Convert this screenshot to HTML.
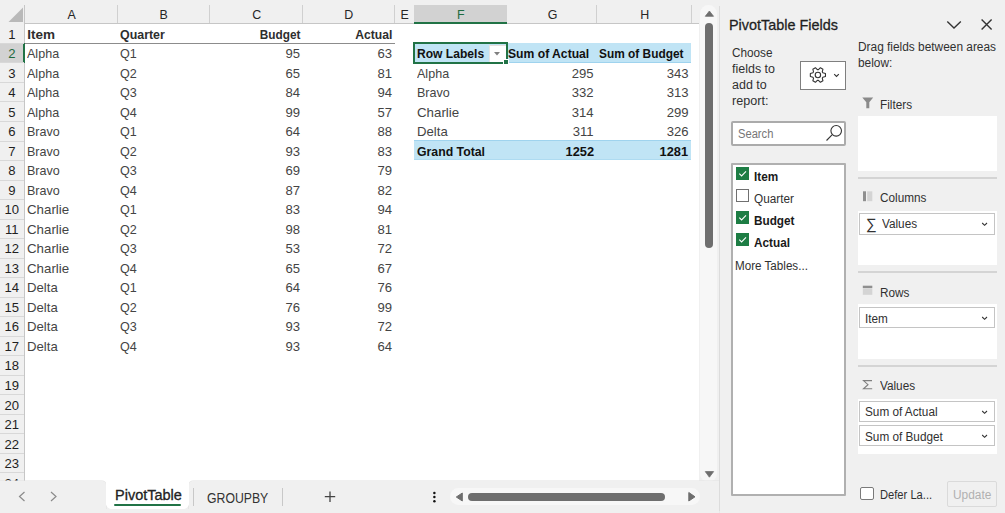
<!DOCTYPE html>
<html><head><meta charset="utf-8"><style>
html,body{margin:0;padding:0;}
body{width:1005px;height:513px;overflow:hidden;position:relative;background:#f0f0f0;font-family:"Liberation Sans", sans-serif;}
.r{position:absolute;}
.t{position:absolute;white-space:nowrap;font-family:"Liberation Sans", sans-serif;}
</style></head><body>
<div class="r" style="left:25px;top:24px;width:674px;height:470px;background:#ffffff;"></div>
<div class="r" style="left:0px;top:0px;width:700px;height:23px;background:#f0f0f0;"></div>
<div class="r" style="left:414px;top:5px;width:93px;height:18px;background:#d2d2d2;"></div>
<div class="r" style="left:414px;top:22px;width:93px;height:2px;background:#217346;"></div>
<div class="r" style="left:117px;top:5px;width:1px;height:18px;background:#d0d0d0;"></div>
<div class="r" style="left:209px;top:5px;width:1px;height:18px;background:#d0d0d0;"></div>
<div class="r" style="left:302px;top:5px;width:1px;height:18px;background:#d0d0d0;"></div>
<div class="r" style="left:394px;top:5px;width:1px;height:18px;background:#d0d0d0;"></div>
<div class="r" style="left:691px;top:5px;width:1px;height:18px;background:#d0d0d0;"></div>
<div class="r" style="left:596px;top:5px;width:1px;height:18px;background:#d0d0d0;"></div>
<div class="r" style="left:24px;top:23px;width:390px;height:1px;background:#c6c6c6;"></div>
<div class="r" style="left:507px;top:23px;width:192px;height:1px;background:#c6c6c6;"></div>
<div class="r" style="left:0px;top:23px;width:24px;height:458px;background:#f0f0f0;"></div>
<div class="r" style="left:24px;top:5px;width:1px;height:476px;background:#c6c6c6;"></div>
<div class="r" style="left:0px;top:43px;width:22.5px;height:20px;background:#d2d2d2;"></div>
<div class="r" style="left:23px;top:43px;width:2px;height:20px;background:#217346;"></div>
<div class="r" style="left:0px;top:43px;width:24px;height:1px;background:#d8d8d8;"></div>
<div class="r" style="left:0px;top:62px;width:24px;height:1px;background:#d8d8d8;"></div>
<div class="r" style="left:0px;top:82px;width:24px;height:1px;background:#d8d8d8;"></div>
<div class="r" style="left:0px;top:101px;width:24px;height:1px;background:#d8d8d8;"></div>
<div class="r" style="left:0px;top:121px;width:24px;height:1px;background:#d8d8d8;"></div>
<div class="r" style="left:0px;top:141px;width:24px;height:1px;background:#d8d8d8;"></div>
<div class="r" style="left:0px;top:160px;width:24px;height:1px;background:#d8d8d8;"></div>
<div class="r" style="left:0px;top:180px;width:24px;height:1px;background:#d8d8d8;"></div>
<div class="r" style="left:0px;top:199px;width:24px;height:1px;background:#d8d8d8;"></div>
<div class="r" style="left:0px;top:219px;width:24px;height:1px;background:#d8d8d8;"></div>
<div class="r" style="left:0px;top:238px;width:24px;height:1px;background:#d8d8d8;"></div>
<div class="r" style="left:0px;top:258px;width:24px;height:1px;background:#d8d8d8;"></div>
<div class="r" style="left:0px;top:277px;width:24px;height:1px;background:#d8d8d8;"></div>
<div class="r" style="left:0px;top:297px;width:24px;height:1px;background:#d8d8d8;"></div>
<div class="r" style="left:0px;top:316px;width:24px;height:1px;background:#d8d8d8;"></div>
<div class="r" style="left:0px;top:336px;width:24px;height:1px;background:#d8d8d8;"></div>
<div class="r" style="left:0px;top:355px;width:24px;height:1px;background:#d8d8d8;"></div>
<div class="r" style="left:0px;top:375px;width:24px;height:1px;background:#d8d8d8;"></div>
<div class="r" style="left:0px;top:394px;width:24px;height:1px;background:#d8d8d8;"></div>
<div class="r" style="left:0px;top:414px;width:24px;height:1px;background:#d8d8d8;"></div>
<div class="r" style="left:0px;top:433px;width:24px;height:1px;background:#d8d8d8;"></div>
<div class="r" style="left:0px;top:453px;width:24px;height:1px;background:#d8d8d8;"></div>
<div class="r" style="left:0px;top:472px;width:24px;height:1px;background:#d8d8d8;"></div>
<svg class="r" style="left:0;top:0" width="25" height="23"><polygon points="8.5,22 23,22 23,7.5" fill="#b9b9b9"/></svg>
<div class="t" style="left:71.75px;top:5.40px;transform-origin:0 0;transform-origin:0 0;transform:translateX(-50%) scaleX(0.92);font-size:13.5px;line-height:20px;font-weight:400;color:#262626;">A</div>
<div class="t" style="left:164.30px;top:5.40px;transform-origin:0 0;transform-origin:0 0;transform:translateX(-50%) scaleX(0.92);font-size:13.5px;line-height:20px;font-weight:400;color:#262626;">B</div>
<div class="t" style="left:256.80px;top:5.40px;transform-origin:0 0;transform-origin:0 0;transform:translateX(-50%) scaleX(0.92);font-size:13.5px;line-height:20px;font-weight:400;color:#262626;">C</div>
<div class="t" style="left:349.20px;top:5.40px;transform-origin:0 0;transform-origin:0 0;transform:translateX(-50%) scaleX(0.92);font-size:13.5px;line-height:20px;font-weight:400;color:#262626;">D</div>
<div class="t" style="left:404.95px;top:5.40px;transform-origin:0 0;transform-origin:0 0;transform:translateX(-50%) scaleX(0.92);font-size:13.5px;line-height:20px;font-weight:400;color:#262626;">E</div>
<div class="t" style="left:461.10px;top:5.40px;transform-origin:0 0;transform-origin:0 0;transform:translateX(-50%) scaleX(0.92);font-size:13.5px;line-height:20px;font-weight:400;color:#1e6b3f;">F</div>
<div class="t" style="left:552.65px;top:5.40px;transform-origin:0 0;transform-origin:0 0;transform:translateX(-50%) scaleX(0.92);font-size:13.5px;line-height:20px;font-weight:400;color:#262626;">G</div>
<div class="t" style="left:645.00px;top:5.40px;transform-origin:0 0;transform-origin:0 0;transform:translateX(-50%) scaleX(0.92);font-size:13.5px;line-height:20px;font-weight:400;color:#262626;">H</div>
<div class="t" style="left:11.70px;top:24.65px;transform-origin:0 0;transform-origin:0 0;transform:translateX(-50%) scaleX(0.97);font-size:13.5px;line-height:20px;font-weight:400;color:#1f1f1f;">1</div>
<div class="t" style="left:11.70px;top:44.17px;transform-origin:0 0;transform-origin:0 0;transform:translateX(-50%) scaleX(0.97);font-size:13.5px;line-height:20px;font-weight:400;color:#1e6b3f;">2</div>
<div class="t" style="left:11.70px;top:63.69px;transform-origin:0 0;transform-origin:0 0;transform:translateX(-50%) scaleX(0.97);font-size:13.5px;line-height:20px;font-weight:400;color:#1f1f1f;">3</div>
<div class="t" style="left:11.70px;top:83.21px;transform-origin:0 0;transform-origin:0 0;transform:translateX(-50%) scaleX(0.97);font-size:13.5px;line-height:20px;font-weight:400;color:#1f1f1f;">4</div>
<div class="t" style="left:11.70px;top:102.73px;transform-origin:0 0;transform-origin:0 0;transform:translateX(-50%) scaleX(0.97);font-size:13.5px;line-height:20px;font-weight:400;color:#1f1f1f;">5</div>
<div class="t" style="left:11.70px;top:122.25px;transform-origin:0 0;transform-origin:0 0;transform:translateX(-50%) scaleX(0.97);font-size:13.5px;line-height:20px;font-weight:400;color:#1f1f1f;">6</div>
<div class="t" style="left:11.70px;top:141.77px;transform-origin:0 0;transform-origin:0 0;transform:translateX(-50%) scaleX(0.97);font-size:13.5px;line-height:20px;font-weight:400;color:#1f1f1f;">7</div>
<div class="t" style="left:11.70px;top:161.29px;transform-origin:0 0;transform-origin:0 0;transform:translateX(-50%) scaleX(0.97);font-size:13.5px;line-height:20px;font-weight:400;color:#1f1f1f;">8</div>
<div class="t" style="left:11.70px;top:180.81px;transform-origin:0 0;transform-origin:0 0;transform:translateX(-50%) scaleX(0.97);font-size:13.5px;line-height:20px;font-weight:400;color:#1f1f1f;">9</div>
<div class="t" style="left:11.70px;top:200.33px;transform-origin:0 0;transform-origin:0 0;transform:translateX(-50%) scaleX(0.97);font-size:13.5px;line-height:20px;font-weight:400;color:#1f1f1f;">10</div>
<div class="t" style="left:11.70px;top:219.85px;transform-origin:0 0;transform-origin:0 0;transform:translateX(-50%) scaleX(0.97);font-size:13.5px;line-height:20px;font-weight:400;color:#1f1f1f;">11</div>
<div class="t" style="left:11.70px;top:239.37px;transform-origin:0 0;transform-origin:0 0;transform:translateX(-50%) scaleX(0.97);font-size:13.5px;line-height:20px;font-weight:400;color:#1f1f1f;">12</div>
<div class="t" style="left:11.70px;top:258.89px;transform-origin:0 0;transform-origin:0 0;transform:translateX(-50%) scaleX(0.97);font-size:13.5px;line-height:20px;font-weight:400;color:#1f1f1f;">13</div>
<div class="t" style="left:11.70px;top:278.41px;transform-origin:0 0;transform-origin:0 0;transform:translateX(-50%) scaleX(0.97);font-size:13.5px;line-height:20px;font-weight:400;color:#1f1f1f;">14</div>
<div class="t" style="left:11.70px;top:297.93px;transform-origin:0 0;transform-origin:0 0;transform:translateX(-50%) scaleX(0.97);font-size:13.5px;line-height:20px;font-weight:400;color:#1f1f1f;">15</div>
<div class="t" style="left:11.70px;top:317.45px;transform-origin:0 0;transform-origin:0 0;transform:translateX(-50%) scaleX(0.97);font-size:13.5px;line-height:20px;font-weight:400;color:#1f1f1f;">16</div>
<div class="t" style="left:11.70px;top:336.97px;transform-origin:0 0;transform-origin:0 0;transform:translateX(-50%) scaleX(0.97);font-size:13.5px;line-height:20px;font-weight:400;color:#1f1f1f;">17</div>
<div class="t" style="left:11.70px;top:356.49px;transform-origin:0 0;transform-origin:0 0;transform:translateX(-50%) scaleX(0.97);font-size:13.5px;line-height:20px;font-weight:400;color:#1f1f1f;">18</div>
<div class="t" style="left:11.70px;top:376.01px;transform-origin:0 0;transform-origin:0 0;transform:translateX(-50%) scaleX(0.97);font-size:13.5px;line-height:20px;font-weight:400;color:#1f1f1f;">19</div>
<div class="t" style="left:11.70px;top:395.53px;transform-origin:0 0;transform-origin:0 0;transform:translateX(-50%) scaleX(0.97);font-size:13.5px;line-height:20px;font-weight:400;color:#1f1f1f;">20</div>
<div class="t" style="left:11.70px;top:415.05px;transform-origin:0 0;transform-origin:0 0;transform:translateX(-50%) scaleX(0.97);font-size:13.5px;line-height:20px;font-weight:400;color:#1f1f1f;">21</div>
<div class="t" style="left:11.70px;top:434.57px;transform-origin:0 0;transform-origin:0 0;transform:translateX(-50%) scaleX(0.97);font-size:13.5px;line-height:20px;font-weight:400;color:#1f1f1f;">22</div>
<div class="t" style="left:11.70px;top:454.09px;transform-origin:0 0;transform-origin:0 0;transform:translateX(-50%) scaleX(0.97);font-size:13.5px;line-height:20px;font-weight:400;color:#1f1f1f;">23</div>
<div class="t" style="left:11.70px;top:473.61px;transform-origin:0 0;transform-origin:0 0;transform:translateX(-50%) scaleX(0.97);font-size:13.5px;line-height:20px;font-weight:400;color:#1f1f1f;">24</div>
<div class="t" style="left:27.20px;top:24.65px;transform-origin:0 0;font-size:13.5px;line-height:20px;font-weight:700;color:#2e2e2e;">Item</div>
<div class="t" style="left:119.80px;top:24.65px;transform-origin:0 0;transform:scaleX(0.92);font-size:13.5px;line-height:20px;font-weight:700;color:#2e2e2e;">Quarter</div>
<div class="t" style="right:704.80px;top:24.65px;transform-origin:100% 0;transform:scaleX(0.875);font-size:13.5px;line-height:20px;font-weight:700;color:#2e2e2e;">Budget</div>
<div class="t" style="right:612.70px;top:24.65px;transform-origin:100% 0;transform:scaleX(0.9);font-size:13.5px;line-height:20px;font-weight:700;color:#2e2e2e;">Actual</div>
<div class="r" style="left:25px;top:43px;width:370px;height:1px;background:#8c8c8c;"></div>
<div class="t" style="left:27.30px;top:44.17px;transform-origin:0 0;transform:scaleX(0.93);font-size:13.5px;line-height:20px;font-weight:400;color:#444444;">Alpha</div>
<div class="t" style="left:119.80px;top:44.17px;transform-origin:0 0;transform:scaleX(0.93);font-size:13.5px;line-height:20px;font-weight:400;color:#444444;">Q1</div>
<div class="t" style="right:704.50px;top:44.17px;transform-origin:100% 0;transform:scaleX(0.97);font-size:13.5px;line-height:20px;font-weight:400;color:#444444;">95</div>
<div class="t" style="right:612.60px;top:44.17px;transform-origin:100% 0;transform:scaleX(0.97);font-size:13.5px;line-height:20px;font-weight:400;color:#444444;">63</div>
<div class="t" style="left:27.30px;top:63.69px;transform-origin:0 0;transform:scaleX(0.93);font-size:13.5px;line-height:20px;font-weight:400;color:#444444;">Alpha</div>
<div class="t" style="left:119.80px;top:63.69px;transform-origin:0 0;transform:scaleX(0.93);font-size:13.5px;line-height:20px;font-weight:400;color:#444444;">Q2</div>
<div class="t" style="right:704.50px;top:63.69px;transform-origin:100% 0;transform:scaleX(0.97);font-size:13.5px;line-height:20px;font-weight:400;color:#444444;">65</div>
<div class="t" style="right:612.60px;top:63.69px;transform-origin:100% 0;transform:scaleX(0.97);font-size:13.5px;line-height:20px;font-weight:400;color:#444444;">81</div>
<div class="t" style="left:27.30px;top:83.21px;transform-origin:0 0;transform:scaleX(0.93);font-size:13.5px;line-height:20px;font-weight:400;color:#444444;">Alpha</div>
<div class="t" style="left:119.80px;top:83.21px;transform-origin:0 0;transform:scaleX(0.93);font-size:13.5px;line-height:20px;font-weight:400;color:#444444;">Q3</div>
<div class="t" style="right:704.50px;top:83.21px;transform-origin:100% 0;transform:scaleX(0.97);font-size:13.5px;line-height:20px;font-weight:400;color:#444444;">84</div>
<div class="t" style="right:612.60px;top:83.21px;transform-origin:100% 0;transform:scaleX(0.97);font-size:13.5px;line-height:20px;font-weight:400;color:#444444;">94</div>
<div class="t" style="left:27.30px;top:102.73px;transform-origin:0 0;transform:scaleX(0.93);font-size:13.5px;line-height:20px;font-weight:400;color:#444444;">Alpha</div>
<div class="t" style="left:119.80px;top:102.73px;transform-origin:0 0;transform:scaleX(0.93);font-size:13.5px;line-height:20px;font-weight:400;color:#444444;">Q4</div>
<div class="t" style="right:704.50px;top:102.73px;transform-origin:100% 0;transform:scaleX(0.97);font-size:13.5px;line-height:20px;font-weight:400;color:#444444;">99</div>
<div class="t" style="right:612.60px;top:102.73px;transform-origin:100% 0;transform:scaleX(0.97);font-size:13.5px;line-height:20px;font-weight:400;color:#444444;">57</div>
<div class="t" style="left:27.30px;top:122.25px;transform-origin:0 0;transform:scaleX(0.93);font-size:13.5px;line-height:20px;font-weight:400;color:#444444;">Bravo</div>
<div class="t" style="left:119.80px;top:122.25px;transform-origin:0 0;transform:scaleX(0.93);font-size:13.5px;line-height:20px;font-weight:400;color:#444444;">Q1</div>
<div class="t" style="right:704.50px;top:122.25px;transform-origin:100% 0;transform:scaleX(0.97);font-size:13.5px;line-height:20px;font-weight:400;color:#444444;">64</div>
<div class="t" style="right:612.60px;top:122.25px;transform-origin:100% 0;transform:scaleX(0.97);font-size:13.5px;line-height:20px;font-weight:400;color:#444444;">88</div>
<div class="t" style="left:27.30px;top:141.77px;transform-origin:0 0;transform:scaleX(0.93);font-size:13.5px;line-height:20px;font-weight:400;color:#444444;">Bravo</div>
<div class="t" style="left:119.80px;top:141.77px;transform-origin:0 0;transform:scaleX(0.93);font-size:13.5px;line-height:20px;font-weight:400;color:#444444;">Q2</div>
<div class="t" style="right:704.50px;top:141.77px;transform-origin:100% 0;transform:scaleX(0.97);font-size:13.5px;line-height:20px;font-weight:400;color:#444444;">93</div>
<div class="t" style="right:612.60px;top:141.77px;transform-origin:100% 0;transform:scaleX(0.97);font-size:13.5px;line-height:20px;font-weight:400;color:#444444;">83</div>
<div class="t" style="left:27.30px;top:161.29px;transform-origin:0 0;transform:scaleX(0.93);font-size:13.5px;line-height:20px;font-weight:400;color:#444444;">Bravo</div>
<div class="t" style="left:119.80px;top:161.29px;transform-origin:0 0;transform:scaleX(0.93);font-size:13.5px;line-height:20px;font-weight:400;color:#444444;">Q3</div>
<div class="t" style="right:704.50px;top:161.29px;transform-origin:100% 0;transform:scaleX(0.97);font-size:13.5px;line-height:20px;font-weight:400;color:#444444;">69</div>
<div class="t" style="right:612.60px;top:161.29px;transform-origin:100% 0;transform:scaleX(0.97);font-size:13.5px;line-height:20px;font-weight:400;color:#444444;">79</div>
<div class="t" style="left:27.30px;top:180.81px;transform-origin:0 0;transform:scaleX(0.93);font-size:13.5px;line-height:20px;font-weight:400;color:#444444;">Bravo</div>
<div class="t" style="left:119.80px;top:180.81px;transform-origin:0 0;transform:scaleX(0.93);font-size:13.5px;line-height:20px;font-weight:400;color:#444444;">Q4</div>
<div class="t" style="right:704.50px;top:180.81px;transform-origin:100% 0;transform:scaleX(0.97);font-size:13.5px;line-height:20px;font-weight:400;color:#444444;">87</div>
<div class="t" style="right:612.60px;top:180.81px;transform-origin:100% 0;transform:scaleX(0.97);font-size:13.5px;line-height:20px;font-weight:400;color:#444444;">82</div>
<div class="t" style="left:27.30px;top:200.33px;transform-origin:0 0;transform:scaleX(0.985);font-size:13.5px;line-height:20px;font-weight:400;color:#444444;">Charlie</div>
<div class="t" style="left:119.80px;top:200.33px;transform-origin:0 0;transform:scaleX(0.93);font-size:13.5px;line-height:20px;font-weight:400;color:#444444;">Q1</div>
<div class="t" style="right:704.50px;top:200.33px;transform-origin:100% 0;transform:scaleX(0.97);font-size:13.5px;line-height:20px;font-weight:400;color:#444444;">83</div>
<div class="t" style="right:612.60px;top:200.33px;transform-origin:100% 0;transform:scaleX(0.97);font-size:13.5px;line-height:20px;font-weight:400;color:#444444;">94</div>
<div class="t" style="left:27.30px;top:219.85px;transform-origin:0 0;transform:scaleX(0.985);font-size:13.5px;line-height:20px;font-weight:400;color:#444444;">Charlie</div>
<div class="t" style="left:119.80px;top:219.85px;transform-origin:0 0;transform:scaleX(0.93);font-size:13.5px;line-height:20px;font-weight:400;color:#444444;">Q2</div>
<div class="t" style="right:704.50px;top:219.85px;transform-origin:100% 0;transform:scaleX(0.97);font-size:13.5px;line-height:20px;font-weight:400;color:#444444;">98</div>
<div class="t" style="right:612.60px;top:219.85px;transform-origin:100% 0;transform:scaleX(0.97);font-size:13.5px;line-height:20px;font-weight:400;color:#444444;">81</div>
<div class="t" style="left:27.30px;top:239.37px;transform-origin:0 0;transform:scaleX(0.985);font-size:13.5px;line-height:20px;font-weight:400;color:#444444;">Charlie</div>
<div class="t" style="left:119.80px;top:239.37px;transform-origin:0 0;transform:scaleX(0.93);font-size:13.5px;line-height:20px;font-weight:400;color:#444444;">Q3</div>
<div class="t" style="right:704.50px;top:239.37px;transform-origin:100% 0;transform:scaleX(0.97);font-size:13.5px;line-height:20px;font-weight:400;color:#444444;">53</div>
<div class="t" style="right:612.60px;top:239.37px;transform-origin:100% 0;transform:scaleX(0.97);font-size:13.5px;line-height:20px;font-weight:400;color:#444444;">72</div>
<div class="t" style="left:27.30px;top:258.89px;transform-origin:0 0;transform:scaleX(0.985);font-size:13.5px;line-height:20px;font-weight:400;color:#444444;">Charlie</div>
<div class="t" style="left:119.80px;top:258.89px;transform-origin:0 0;transform:scaleX(0.93);font-size:13.5px;line-height:20px;font-weight:400;color:#444444;">Q4</div>
<div class="t" style="right:704.50px;top:258.89px;transform-origin:100% 0;transform:scaleX(0.97);font-size:13.5px;line-height:20px;font-weight:400;color:#444444;">65</div>
<div class="t" style="right:612.60px;top:258.89px;transform-origin:100% 0;transform:scaleX(0.97);font-size:13.5px;line-height:20px;font-weight:400;color:#444444;">67</div>
<div class="t" style="left:27.30px;top:278.41px;transform-origin:0 0;transform:scaleX(0.975);font-size:13.5px;line-height:20px;font-weight:400;color:#444444;">Delta</div>
<div class="t" style="left:119.80px;top:278.41px;transform-origin:0 0;transform:scaleX(0.93);font-size:13.5px;line-height:20px;font-weight:400;color:#444444;">Q1</div>
<div class="t" style="right:704.50px;top:278.41px;transform-origin:100% 0;transform:scaleX(0.97);font-size:13.5px;line-height:20px;font-weight:400;color:#444444;">64</div>
<div class="t" style="right:612.60px;top:278.41px;transform-origin:100% 0;transform:scaleX(0.97);font-size:13.5px;line-height:20px;font-weight:400;color:#444444;">76</div>
<div class="t" style="left:27.30px;top:297.93px;transform-origin:0 0;transform:scaleX(0.975);font-size:13.5px;line-height:20px;font-weight:400;color:#444444;">Delta</div>
<div class="t" style="left:119.80px;top:297.93px;transform-origin:0 0;transform:scaleX(0.93);font-size:13.5px;line-height:20px;font-weight:400;color:#444444;">Q2</div>
<div class="t" style="right:704.50px;top:297.93px;transform-origin:100% 0;transform:scaleX(0.97);font-size:13.5px;line-height:20px;font-weight:400;color:#444444;">76</div>
<div class="t" style="right:612.60px;top:297.93px;transform-origin:100% 0;transform:scaleX(0.97);font-size:13.5px;line-height:20px;font-weight:400;color:#444444;">99</div>
<div class="t" style="left:27.30px;top:317.45px;transform-origin:0 0;transform:scaleX(0.975);font-size:13.5px;line-height:20px;font-weight:400;color:#444444;">Delta</div>
<div class="t" style="left:119.80px;top:317.45px;transform-origin:0 0;transform:scaleX(0.93);font-size:13.5px;line-height:20px;font-weight:400;color:#444444;">Q3</div>
<div class="t" style="right:704.50px;top:317.45px;transform-origin:100% 0;transform:scaleX(0.97);font-size:13.5px;line-height:20px;font-weight:400;color:#444444;">93</div>
<div class="t" style="right:612.60px;top:317.45px;transform-origin:100% 0;transform:scaleX(0.97);font-size:13.5px;line-height:20px;font-weight:400;color:#444444;">72</div>
<div class="t" style="left:27.30px;top:336.97px;transform-origin:0 0;transform:scaleX(0.975);font-size:13.5px;line-height:20px;font-weight:400;color:#444444;">Delta</div>
<div class="t" style="left:119.80px;top:336.97px;transform-origin:0 0;transform:scaleX(0.93);font-size:13.5px;line-height:20px;font-weight:400;color:#444444;">Q4</div>
<div class="t" style="right:704.50px;top:336.97px;transform-origin:100% 0;transform:scaleX(0.97);font-size:13.5px;line-height:20px;font-weight:400;color:#444444;">93</div>
<div class="t" style="right:612.60px;top:336.97px;transform-origin:100% 0;transform:scaleX(0.97);font-size:13.5px;line-height:20px;font-weight:400;color:#444444;">64</div>
<div class="r" style="left:414px;top:43px;width:277.4px;height:19.5px;background:#c0e4f5;"></div>
<div class="r" style="left:414px;top:61.5px;width:277.4px;height:1px;background:#9fd3ee;"></div>
<div class="r" style="left:414px;top:140px;width:277.4px;height:20px;background:#c0e4f5;"></div>
<div class="r" style="left:414px;top:140px;width:277.4px;height:1px;background:#9fd3ee;"></div>
<div class="r" style="left:414px;top:159px;width:277.4px;height:1px;background:#aedbf1;"></div>
<div class="t" style="left:417.00px;top:44.17px;transform-origin:0 0;transform:scaleX(0.895);font-size:13.5px;line-height:20px;font-weight:700;color:#111111;">Row Labels</div>
<div class="t" style="left:508.20px;top:44.17px;transform-origin:0 0;transform:scaleX(0.9);font-size:13.5px;line-height:20px;font-weight:700;color:#111111;">Sum of Actual</div>
<div class="t" style="left:599.00px;top:44.17px;transform-origin:0 0;transform:scaleX(0.88);font-size:13.5px;line-height:20px;font-weight:700;color:#111111;">Sum of Budget</div>
<div class="t" style="left:417.00px;top:63.69px;transform-origin:0 0;transform:scaleX(0.93);font-size:13.5px;line-height:20px;font-weight:400;color:#444444;">Alpha</div>
<div class="t" style="right:411.00px;top:63.69px;transform-origin:100% 0;transform:scaleX(0.97);font-size:13.5px;line-height:20px;font-weight:400;color:#444444;">295</div>
<div class="t" style="right:316.50px;top:63.69px;transform-origin:100% 0;transform:scaleX(0.97);font-size:13.5px;line-height:20px;font-weight:400;color:#444444;">343</div>
<div class="t" style="left:417.00px;top:83.21px;transform-origin:0 0;transform:scaleX(0.93);font-size:13.5px;line-height:20px;font-weight:400;color:#444444;">Bravo</div>
<div class="t" style="right:411.00px;top:83.21px;transform-origin:100% 0;transform:scaleX(0.97);font-size:13.5px;line-height:20px;font-weight:400;color:#444444;">332</div>
<div class="t" style="right:316.50px;top:83.21px;transform-origin:100% 0;transform:scaleX(0.97);font-size:13.5px;line-height:20px;font-weight:400;color:#444444;">313</div>
<div class="t" style="left:417.00px;top:102.73px;transform-origin:0 0;transform:scaleX(0.985);font-size:13.5px;line-height:20px;font-weight:400;color:#444444;">Charlie</div>
<div class="t" style="right:411.00px;top:102.73px;transform-origin:100% 0;transform:scaleX(0.97);font-size:13.5px;line-height:20px;font-weight:400;color:#444444;">314</div>
<div class="t" style="right:316.50px;top:102.73px;transform-origin:100% 0;transform:scaleX(0.97);font-size:13.5px;line-height:20px;font-weight:400;color:#444444;">299</div>
<div class="t" style="left:417.00px;top:122.25px;transform-origin:0 0;transform:scaleX(0.975);font-size:13.5px;line-height:20px;font-weight:400;color:#444444;">Delta</div>
<div class="t" style="right:411.00px;top:122.25px;transform-origin:100% 0;transform:scaleX(0.97);font-size:13.5px;line-height:20px;font-weight:400;color:#444444;">311</div>
<div class="t" style="right:316.50px;top:122.25px;transform-origin:100% 0;transform:scaleX(0.97);font-size:13.5px;line-height:20px;font-weight:400;color:#444444;">326</div>
<div class="t" style="left:417.30px;top:141.77px;transform-origin:0 0;transform:scaleX(0.91);font-size:13.5px;line-height:20px;font-weight:700;color:#111111;">Grand Total</div>
<div class="t" style="right:411.00px;top:141.77px;transform-origin:100% 0;transform:scaleX(0.95);font-size:13.5px;line-height:20px;font-weight:700;color:#111111;">1252</div>
<div class="t" style="right:316.50px;top:141.77px;transform-origin:100% 0;transform:scaleX(0.95);font-size:13.5px;line-height:20px;font-weight:700;color:#111111;">1281</div>
<div class="r" style="left:489px;top:45px;width:17px;height:17px;background:#ffffff;border-left:1px solid #e4e4e4;border-top:1px solid #eadede;box-sizing:border-box;"></div>
<svg class="r" style="left:489px;top:45px" width="17" height="17"><polygon points="5,7 11,7 8,10.5" fill="#808080"/></svg>
<div class="r" style="left:413px;top:42px;width:94.5px;height:22px;border:2px solid #217346;box-sizing:border-box;"></div>
<div class="r" style="left:503px;top:59px;width:4px;height:4px;background:#217346;border:1px solid #fff;box-sizing:content-box;"></div>
<div class="r" style="left:700px;top:0px;width:19px;height:482px;background:#f0f0f0;"></div>
<div class="r" style="left:700px;top:5px;width:17px;height:477px;background:#f7f7f7;border-radius:8.5px;"></div>
<svg class="r" style="left:700px;top:5px" width="19" height="20"><polygon points="705.3,16.3 713.5,16.3 709.4,11" transform="translate(-700,-5)" fill="#6e6e6e" stroke="#6e6e6e" stroke-width="0.8" stroke-linejoin="round"/></svg>
<div class="r" style="left:705px;top:22.6px;width:8.3px;height:225px;background:#6e6e6e;border-radius:4.25px;"></div>
<svg class="r" style="left:700px;top:465.7px" width="19" height="16"><polygon points="5.3,5.6 13.6,5.6 9.4,11.2" fill="#6e6e6e" stroke="#6e6e6e" stroke-width="0.8" stroke-linejoin="round"/></svg>
<div class="r" style="left:-1px;top:481px;width:106.5px;height:33px;background:#f0f0f0;border-top-right-radius:4px;box-shadow:0 0 0 0.6px #e2e2e2;"></div>
<div class="r" style="left:189px;top:481px;width:530px;height:33px;background:#f0f0f0;border-top-left-radius:4px;box-shadow:0 0 0 0.6px #e2e2e2;"></div>
<div class="r" style="left:105.5px;top:478px;width:83.5px;height:30.5px;background:#fff;border-radius:0 0 6px 6px;"></div>
<div class="r" style="left:100px;top:508.5px;width:95px;height:5px;background:#f0f0f0;"></div>
<div class="r" style="left:105.5px;top:478px;width:83.5px;height:30.5px;background:#fff;border-radius:0 0 6px 6px;"></div>
<svg class="r" style="left:0;top:481px" width="100" height="32"><polyline points="24.5,11 19.5,15.5 24.5,20" fill="none" stroke="#8a8a8a" stroke-width="1.2"/><polyline points="51,11 56,15.5 51,20" fill="none" stroke="#8a8a8a" stroke-width="1.2"/></svg>
<div class="t" style="left:114.90px;top:484.80px;transform-origin:0 0;transform:scaleX(1.035);font-size:14px;line-height:20px;font-weight:400;color:#222;-webkit-text-stroke:0.3px #222;">PivotTable</div>
<div class="r" style="left:114px;top:503.5px;width:67px;height:2.5px;background:#217346;border-radius:1px;"></div>
<div class="r" style="left:193px;top:488px;width:1px;height:17.5px;background:#c8c8c8;"></div>
<div class="t" style="left:206.90px;top:487.50px;transform-origin:0 0;transform:scaleX(0.875);font-size:14px;line-height:20px;font-weight:400;color:#333;">GROUPBY</div>
<div class="r" style="left:282px;top:488px;width:1px;height:17.5px;background:#c8c8c8;"></div>
<svg class="r" style="left:320px;top:486px" width="20" height="20"><path d="M10 5.4 V15.9 M4.8 10.65 H15.2" stroke="#444" stroke-width="1.3"/></svg>
<svg class="r" style="left:428px;top:488px" width="12" height="18"><circle cx="6.4" cy="5.1" r="1.25" fill="#111"/><circle cx="6.4" cy="9.1" r="1.25" fill="#111"/><circle cx="6.4" cy="13.3" r="1.25" fill="#111"/></svg>
<div class="r" style="left:450.3px;top:488px;width:250px;height:17.4px;background:#f7f7f7;border-radius:8.7px;"></div>
<svg class="r" style="left:450px;top:488px" width="250" height="18"><polygon points="6.3,9 12.3,5 12.3,13" fill="#6e6e6e" stroke="#6e6e6e" stroke-linejoin="round"/><polygon points="238.8,4.5 238.8,13 245,8.8" fill="#6e6e6e" stroke="#6e6e6e" stroke-linejoin="round"/></svg>
<div class="r" style="left:467.8px;top:492.5px;width:197px;height:8.4px;background:#6e6e6e;border-radius:4.2px;"></div>
<div class="r" style="left:719px;top:6px;width:1px;height:505px;background:#dcdcdc;"></div>
<div class="r" style="left:720px;top:0px;width:285px;height:513px;background:#f0f0f0;"></div>
<div class="t" style="left:729.20px;top:15.10px;transform-origin:0 0;transform:scaleX(0.96);font-size:15px;line-height:20px;font-weight:400;color:#1f1f1f;-webkit-text-stroke:0.3px #1f1f1f;">PivotTable Fields</div>
<svg class="r" style="left:940px;top:14px" width="60" height="22"><polyline points="7.3,7.6 14,14 20.8,7.6" fill="none" stroke="#333" stroke-width="1.4"/><path d="M41.6 5.6 L51.6 15.6 M51.6 5.6 L41.6 15.6" stroke="#333" stroke-width="1.4"/></svg>
<div class="t" style="left:731.80px;top:42.50px;transform-origin:0 0;transform:scaleX(0.98);font-size:12px;line-height:20px;font-weight:400;color:#303030;">Choose</div>
<div class="t" style="left:731.80px;top:58.50px;transform-origin:0 0;transform:scaleX(1.04);font-size:12px;line-height:20px;font-weight:400;color:#303030;">fields to</div>
<div class="t" style="left:731.80px;top:74.50px;transform-origin:0 0;transform:scaleX(1.04);font-size:12px;line-height:20px;font-weight:400;color:#303030;">add to</div>
<div class="t" style="left:731.80px;top:90.50px;transform-origin:0 0;transform:scaleX(1.05);font-size:12px;line-height:20px;font-weight:400;color:#303030;">report:</div>
<div class="t" style="left:858.20px;top:37.40px;transform-origin:0 0;transform:scaleX(0.99);font-size:12px;line-height:20px;font-weight:400;color:#303030;">Drag fields between areas</div>
<div class="t" style="left:858.20px;top:53.00px;transform-origin:0 0;transform:scaleX(0.99);font-size:12px;line-height:20px;font-weight:400;color:#303030;">below:</div>
<div class="r" style="left:800px;top:61px;width:46px;height:28.5px;background:#fff;border:1px solid #7f7f7f;box-sizing:border-box;"></div>
<svg class="r" style="left:800px;top:61px" width="46" height="29"><polygon points="22.83,11.80 25.46,12.53 25.46,15.47 22.83,16.20 22.27,17.17 22.95,19.81 20.41,21.28 18.46,19.37 17.34,19.37 15.39,21.28 12.85,19.81 13.53,17.17 12.97,16.20 10.34,15.47 10.34,12.53 12.97,11.80 13.53,10.83 12.85,8.19 15.39,6.72 17.34,8.63 18.46,8.63 20.41,6.72 22.95,8.19 22.27,10.83" fill="none" stroke="#333" stroke-width="1.1" stroke-linejoin="round"/><circle cx="17.9" cy="14.0" r="2.7" fill="none" stroke="#333" stroke-width="1.1"/><polyline points="34.2,13.2 36.5,15.5 38.8,13.2" fill="none" stroke="#333" stroke-width="1.1"/></svg>
<div class="r" style="left:731px;top:121px;width:115px;height:25px;background:#fff;border:2px solid #ababab;border-radius:2px;box-sizing:border-box;"></div>
<div class="t" style="left:738.30px;top:123.80px;transform-origin:0 0;transform:scaleX(0.93);font-size:12px;line-height:20px;font-weight:400;color:#767676;">Search</div>
<svg class="r" style="left:815px;top:118px" width="30" height="30"><circle cx="21.2" cy="12.8" r="5.3" fill="none" stroke="#333" stroke-width="1.1"/><path d="M17 16.8 L11.5 22.5" stroke="#333" stroke-width="1.1"/></svg>
<div class="r" style="left:731px;top:163px;width:115px;height:333px;background:#fff;border:2px solid #b0b0b0;border-radius:1px;box-sizing:border-box;"></div>
<svg class="r" style="left:736px;top:167px" width="13" height="13"><rect x="0" y="0" width="13" height="13" fill="#1d7d44"/><polyline points="3.3,6.6 5.6,8.9 10,4.4" fill="none" stroke="#fff" stroke-width="1.1"/></svg>
<div class="t" style="left:754.00px;top:166.80px;transform-origin:0 0;transform:scaleX(0.98);font-size:12px;line-height:20px;font-weight:700;color:#1a1a1a;">Item</div>
<div class="r" style="left:736px;top:189px;width:13px;height:13px;border:1px solid #707070;box-sizing:border-box;background:#fff;"></div>
<div class="t" style="left:753.80px;top:188.70px;transform-origin:0 0;transform:scaleX(0.98);font-size:12px;line-height:20px;font-weight:400;color:#303030;">Quarter</div>
<svg class="r" style="left:736px;top:211px" width="13" height="13"><rect x="0" y="0" width="13" height="13" fill="#1d7d44"/><polyline points="3.3,6.6 5.6,8.9 10,4.4" fill="none" stroke="#fff" stroke-width="1.1"/></svg>
<div class="t" style="left:754.00px;top:210.80px;transform-origin:0 0;transform:scaleX(0.98);font-size:12px;line-height:20px;font-weight:700;color:#1a1a1a;">Budget</div>
<svg class="r" style="left:736px;top:233px" width="13" height="13"><rect x="0" y="0" width="13" height="13" fill="#1d7d44"/><polyline points="3.3,6.6 5.6,8.9 10,4.4" fill="none" stroke="#fff" stroke-width="1.1"/></svg>
<div class="t" style="left:754.00px;top:232.80px;transform-origin:0 0;transform:scaleX(0.98);font-size:12px;line-height:20px;font-weight:700;color:#1a1a1a;">Actual</div>
<div class="t" style="left:735.00px;top:255.50px;transform-origin:0 0;transform:scaleX(0.97);font-size:12px;line-height:20px;font-weight:400;color:#303030;">More Tables...</div>
<svg class="r" style="left:860px;top:96px" width="16" height="14"><polygon points="2.3,1.5 13.2,1.5 9.3,6.2 9.3,12.3 6.3,12.3 6.3,6.2" fill="#8a8a8a"/></svg>
<div class="t" style="left:880.00px;top:94.70px;transform-origin:0 0;transform:scaleX(0.98);font-size:12px;line-height:20px;font-weight:400;color:#303030;">Filters</div>
<div class="r" style="left:857.6px;top:116.3px;width:139.2px;height:54.7px;background:#fff;"></div>
<div class="r" style="left:857.6px;top:177px;width:139.2px;height:1.5px;background:#d4d4d4;"></div>
<svg class="r" style="left:860px;top:190px" width="16" height="14"><rect x="3" y="1.3" width="3" height="9.9" fill="#8f8f8f"/><rect x="7.2" y="1.3" width="5.1" height="9.9" fill="#d4d4d4"/></svg>
<div class="t" style="left:880.00px;top:188.40px;transform-origin:0 0;transform:scaleX(0.98);font-size:12px;line-height:20px;font-weight:400;color:#303030;">Columns</div>
<div class="r" style="left:857.6px;top:210.6px;width:139.2px;height:54.8px;background:#fff;"></div>
<div class="r" style="left:857.6px;top:271.3px;width:139.2px;height:1.5px;background:#d4d4d4;"></div>
<svg class="r" style="left:860px;top:284px" width="16" height="14"><rect x="2.8" y="1.7" width="9.5" height="2.3" fill="#8f8f8f"/><rect x="2.8" y="4.2" width="9.5" height="6.6" fill="#d4d4d4"/></svg>
<div class="t" style="left:880.00px;top:282.50px;transform-origin:0 0;transform:scaleX(0.98);font-size:12px;line-height:20px;font-weight:400;color:#303030;">Rows</div>
<div class="r" style="left:857.6px;top:304.4px;width:139.2px;height:55px;background:#fff;"></div>
<div class="r" style="left:857.6px;top:365.3px;width:139.2px;height:1.5px;background:#d4d4d4;"></div>
<svg class="r" style="left:860px;top:380px" width="16" height="14"><path d="M12 0.6 H3.5 L8 4.7 L3.5 8.8 H12.2" fill="none" stroke="#7f7f7f" stroke-width="1.1" stroke-linejoin="miter"/></svg>
<div class="t" style="left:880.00px;top:376.00px;transform-origin:0 0;transform:scaleX(0.98);font-size:12px;line-height:20px;font-weight:400;color:#303030;">Values</div>
<div class="r" style="left:857.6px;top:399.4px;width:139.2px;height:54.7px;background:#fff;"></div>
<div class="r" style="left:858.7px;top:212.7px;width:136.7px;height:21.900000000000006px;background:#fff;border:1px solid #c4c4c4;box-sizing:border-box;"></div>
<div class="t" style="left:866px;top:216.2px;font-size:15px;line-height:15px;color:#333;">&sum;</div>
<div class="t" style="left:882.20px;top:214.20px;transform-origin:0 0;transform:scaleX(0.98);font-size:12px;line-height:20px;font-weight:400;color:#303030;">Values</div>
<svg class="r" style="left:978px;top:212.7px" width="14" height="22"><polyline points="4.2,10 6.6,12.3 9,10" fill="none" stroke="#333" stroke-width="1.1"/></svg>
<div class="r" style="left:858.7px;top:307.3px;width:136.7px;height:21.099999999999966px;background:#fff;border:1px solid #c4c4c4;box-sizing:border-box;"></div>
<div class="t" style="left:865.20px;top:308.80px;transform-origin:0 0;transform:scaleX(0.98);font-size:12px;line-height:20px;font-weight:400;color:#303030;">Item</div>
<svg class="r" style="left:978px;top:307.3px" width="14" height="22"><polyline points="4.2,10 6.6,12.3 9,10" fill="none" stroke="#333" stroke-width="1.1"/></svg>
<div class="r" style="left:858.7px;top:400.9px;width:136.7px;height:21.0px;background:#fff;border:1px solid #c4c4c4;box-sizing:border-box;"></div>
<div class="t" style="left:865.20px;top:402.40px;transform-origin:0 0;transform:scaleX(0.98);font-size:12px;line-height:20px;font-weight:400;color:#303030;">Sum of Actual</div>
<svg class="r" style="left:978px;top:400.9px" width="14" height="22"><polyline points="4.2,10 6.6,12.3 9,10" fill="none" stroke="#333" stroke-width="1.1"/></svg>
<div class="r" style="left:858.7px;top:425.1px;width:136.7px;height:21.099999999999966px;background:#fff;border:1px solid #c4c4c4;box-sizing:border-box;"></div>
<div class="t" style="left:865.20px;top:426.60px;transform-origin:0 0;transform:scaleX(0.98);font-size:12px;line-height:20px;font-weight:400;color:#303030;">Sum of Budget</div>
<svg class="r" style="left:978px;top:425.1px" width="14" height="22"><polyline points="4.2,10 6.6,12.3 9,10" fill="none" stroke="#333" stroke-width="1.1"/></svg>
<div class="r" style="left:860px;top:487px;width:14px;height:13px;border:1px solid #7a7a7a;border-radius:2px;box-sizing:border-box;background:#fff;"></div>
<div class="t" style="left:879.70px;top:484.90px;transform-origin:0 0;transform:scaleX(0.93);font-size:12px;line-height:20px;font-weight:400;color:#303030;">Defer La...</div>
<div class="r" style="left:947px;top:480.5px;width:49.5px;height:26px;border:1px solid #dadada;border-radius:2px;box-sizing:border-box;"></div>
<div class="t" style="left:952.60px;top:485.00px;transform-origin:0 0;transform:scaleX(0.99);font-size:12px;line-height:20px;font-weight:400;color:#b0b0b0;">Update</div>
</body></html>
